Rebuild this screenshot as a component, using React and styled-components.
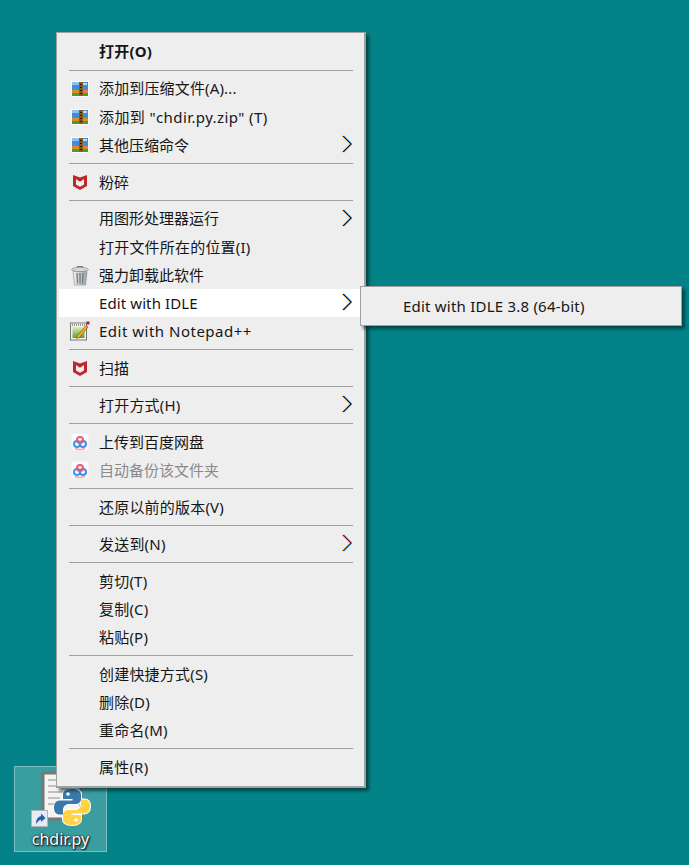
import React from 'react';
import styled, { createGlobalStyle } from 'styled-components';

const Global = createGlobalStyle`
  html, body { margin: 0; padding: 0; height: 100%; background: #038387; overflow: hidden; }
  #root { height: 865px; }
`;
const FONT = `"Noto Sans", "Noto Sans CJK SC", sans-serif`;

const Desktop = styled.div`
  position: relative;
  width: 689px;
  height: 865px;
  background: #038387;
  font-family: ${FONT};
  font-size: 15px;
  color: #161616;
`;
const Menu = styled.div`
  position: absolute;
  left: 56px;
  top: 32px;
  width: 307px;
  padding: 5px 0;
  background: #eeeeee;
  border: 1px solid #a0a0a0;
  border-right-width: 2px;
  border-bottom-width: 2px;
  box-shadow: 3px 3px 3px rgba(0, 40, 40, 0.65);
  display: flex;
  flex-direction: column;
`;
const Row = styled.div`
  display: flex;
  align-items: center;
  box-sizing: border-box;
  height: 28px;
  padding-left: 10px;
  padding-right: 10px;
  margin-left: 2px;
  background: ${p => (p.$active ? '#ffffff' : 'transparent')};
  color: ${p => (p.$disabled ? '#8a8a8a' : '#161616')};
  font-weight: ${p => (p.$bold ? 700 : 400)};
  white-space: pre;
`;
const IconSlot = styled.span`
  flex: none;
  width: 22px;
  height: 22px;
  margin-right: 8px;
  display: flex;
  align-items: center;
  justify-content: center;
`;
const Label = styled.span`
  flex: 1;
  padding-bottom: ${p => p.$lift}px;
  letter-spacing: ${p => p.$track}px;
`;
const ArrowSlot = styled.span`
  flex: none;
  width: 10px;
  height: 18px;
  margin-right: 2px;
  margin-bottom: 2px;
`;
const Sep = styled.div`
  height: 1px;
  margin: 4px 11px 4px 12px;
  background: #a0a0a0;
`;
const SubMenu = styled.div`
  position: absolute;
  left: 360px;
  top: 286px;
  width: 278px;
  height: 38px;
  background: #eeeeee;
  border: 1px solid #a0a0a0;
  box-shadow: 3px 3px 3px rgba(0, 40, 40, 0.65);
  display: flex;
  align-items: center;
  padding-left: 42px;
  letter-spacing: 0.22px;
`;
const DesktopIcon = styled.div`
  position: absolute;
  left: 14px;
  top: 766px;
  width: 91px;
  height: 84px;
  background: rgba(255, 255, 255, 0.22);
  border: 1px solid rgba(255, 255, 255, 0.35);
  display: flex;
  flex-direction: column;
  align-items: center;
`;
const FileArt = styled.svg`
  flex: none;
  margin-top: 1px;
  margin-left: 15px;
  align-self: flex-start;
`;
const FileLabel = styled.span`
  color: #fff;
  font-size: 16px;
  line-height: 20px;
  margin-top: -1px;
  text-shadow: 1px 1px 2px #000, 0 0 2px #000;
`;

const Rar = () => (
  <svg width="18" height="16" viewBox="0 0 18 16">
    <rect x="0" y="0" width="18" height="16" fill="#fff" opacity=".75" />
    <rect x="1" y="1" width="16" height="8" fill="#3d8ee0" />
    <rect x="1" y="1" width="8" height="3" fill="#8cc4f0" />
    <rect x="11" y="2" width="5" height="2" fill="#bcdcf6" />
    <rect x="1" y="9" width="16" height="3" fill="#e08a24" />
    <rect x="1" y="12" width="16" height="3" fill="#4d9a2d" />
    <rect x="8" y="1" width="4" height="14" fill="#8a5a1c" />
    <rect x="9" y="3" width="2" height="1" fill="#2a1a08" />
    <rect x="9" y="6" width="2" height="1" fill="#2a1a08" />
    <rect x="9" y="9" width="2" height="1" fill="#2a1a08" />
    <rect x="9" y="12" width="2" height="1" fill="#2a1a08" />
  </svg>
);
const Mcafee = () => (
  <svg width="16" height="17" viewBox="0 0 16 17">
    <path fill="#c0272d" fillRule="evenodd" d="M1 1 L8 3.5 L15 1 V12 L8 16 L1 12 Z M4 5 V10.5 L8 12.8 L12 10.5 V5 L8 7.8 Z" />
  </svg>
);
const Trash = () => (
  <svg width="20" height="21" viewBox="0 0 20 21">
    <defs>
      <linearGradient id="tr" x1="0" x2="1"><stop offset="0" stopColor="#f4f4f4" /><stop offset="1" stopColor="#9aa0a4" /></linearGradient>
    </defs>
    <path d="M7 3 V1.5 H13 V3" fill="none" stroke="#7a7f84" />
    <ellipse cx="10" cy="4.5" rx="8.5" ry="2" fill="#d8dadc" stroke="#858a8e" strokeWidth=".7" />
    <path d="M3 6.5 H17 L15.5 20 H4.5 Z" fill="url(#tr)" stroke="#858a8e" strokeWidth=".6" />
    <path d="M7 8 L7.5 18.5 M10 8 V18.5 M13 8 L12.5 18.5" stroke="#6d7276" strokeWidth="1.2" />
  </svg>
);
const Notepad = () => (
  <svg width="20" height="20" viewBox="0 0 20 20">
    <defs>
      <linearGradient id="np" x1="0" x2="0" y1="0" y2="1"><stop offset="0" stopColor="#e4ecb0" /><stop offset="1" stopColor="#4fa336" /></linearGradient>
    </defs>
    <rect x="0.5" y="2" width="16" height="17" fill="#f2f2ea" stroke="#777" />
    <rect x="2.5" y="6" width="12" height="11" fill="url(#np)" />
    <path d="M2 4 H15" stroke="#999" strokeDasharray="1 1" strokeWidth="2" />
    <path d="M7 15 L16 4.5 L18 6 L9.5 16.5 L6.5 17.5 Z" fill="#f2b01e" stroke="#6b4a10" strokeWidth=".6" />
    <rect x="16.5" y="0.5" width="3" height="3" fill="#a8222a" />
  </svg>
);
const Baidu = () => (
  <svg width="18" height="18" viewBox="0 0 18 18">
    <rect x=".5" y=".5" width="17" height="17" rx="4" fill="#fbfbfd" />
    <path d="M3 11 a3 3 0 1 1 6 0 a3 3 0 1 1 -6 0" fill="none" stroke="#2f9df0" strokeWidth="2" />
    <path d="M9 11 a3 3 0 1 1 6 0 a3 3 0 1 1 -6 0" fill="none" stroke="#3f8ee8" strokeWidth="2" />
    <path d="M6 7 a3 3 0 1 1 6 0 a3 3 0 1 1 -6 0" fill="none" stroke="#ec5a6e" strokeWidth="2" />
    <path d="M4 15.5 Q9 17.5 14 15.5" fill="none" stroke="#f3a5b2" strokeWidth="1.5" />
  </svg>
);
const Chevron = ({ color = '#111' }) => (
  <svg width="10" height="18" viewBox="0 0 10 18">
    <path d="M1 1 L9 9 L1 17" fill="none" stroke="#f0a030" strokeWidth="1.4" transform="translate(-.6 0)" />
    <path d="M1 1 L9 9 L1 17" fill="none" stroke="#1e88e5" strokeWidth="1.4" transform="translate(.6 0)" />
    <path d="M1 1 L9 9 L1 17" fill="none" stroke={color} strokeWidth="1" />
  </svg>
);
const SNAKE = 'M18.7 1 C11 1 10 4 10 7 V11 H19.5 V12.5 H6.5 C3 12.5 1 15.5 1 19.5 C1 24 3 26.5 6.5 26.5 H10 V21.8 C10 18.5 12.7 16 16 16 H23 C25.8 16 28 13.8 28 11 V6.5 C28 3.5 25 1 18.7 1 Z';

const groups = [
  [{ t: '打开(O)', bold: true, lift: 4 }],
  [
    { t: '添加到压缩文件(A)...', icon: <Rar />, lift: 4, track: 0.15 },
    { t: '添加到 "chdir.py.zip" (T)', icon: <Rar />, track: 0.4 },
    { t: '其他压缩命令', icon: <Rar />, arrow: true },
  ],
  [{ t: '粉碎', icon: <Mcafee /> }],
  [
    { t: '用图形处理器运行', arrow: true, lift: 4 },
    { t: '打开文件所在的位置(I)' },
    { t: '强力卸载此软件', icon: <Trash /> },
    { t: 'Edit with IDLE', arrow: true, active: true, lift: 0, track: 0.1 },
    { t: 'Edit with Notepad++', icon: <Notepad />, lift: 0, track: 0.5 },
  ],
  [{ t: '扫描', icon: <Mcafee /> }],
  [{ t: '打开方式(H)', arrow: true }],
  [
    { t: '上传到百度网盘', icon: <Baidu /> },
    { t: '自动备份该文件夹', icon: <Baidu />, disabled: true },
  ],
  [{ t: '还原以前的版本(V)' }],
  [{ t: '发送到(N)', arrow: true, arrowColor: '#7a1020' }],
  [{ t: '剪切(T)' }, { t: '复制(C)' }, { t: '粘贴(P)' }],
  [{ t: '创建快捷方式(S)' }, { t: '删除(D)' }, { t: '重命名(M)' }],
  [{ t: '属性(R)' }],
];

const defaultTrack = t => (t.includes('(') ? 0.2 : 0);

export default function App() {
  return (
    <Desktop>
      <Global />
      <DesktopIcon>
        <FileArt width="62" height="62" viewBox="0 0 62 62">
          <rect x="13" y="5" width="38" height="46" fill="#f4f4f4" stroke="#777" strokeWidth="3" />
          <path d="M18 12 H46 M18 18 H46 M18 24 H36 M18 30 H30 M18 36 H28" stroke="#c0c0c0" strokeWidth="2" />
          <g transform="translate(23 20)">
            <path d={SNAKE} fill="#fff" stroke="#fff" strokeWidth="2" />
            <path d={SNAKE} transform="rotate(180 19 19)" fill="#fff" stroke="#fff" strokeWidth="2" />
            <path d={SNAKE} fill="#3c78aa" />
            <path d={SNAKE} transform="rotate(180 19 19)" fill="#ffd343" />
            <circle cx="15" cy="6" r="1.8" fill="#fff" />
            <circle cx="23" cy="32" r="1.8" fill="#fff" />
          </g>
          <rect x="1.5" y="42.5" width="16" height="16" fill="#e6ecf4" stroke="#b0b4ba" />
          <path d="M6 56 Q6 49 11 48 V45.5 L15.5 50 L11 54 V51.5 Q8.5 52 6 56 Z" fill="#1f5fb4" />
        </FileArt>
        <FileLabel>chdir.py</FileLabel>
      </DesktopIcon>
      <Menu>
        {groups.map((g, i) => (
          <React.Fragment key={i}>
            {i > 0 && <Sep />}
            {g.map(r => (
              <Row key={r.t} $bold={r.bold} $active={r.active} $disabled={r.disabled}>
                <IconSlot>{r.icon}</IconSlot>
                <Label $lift={r.lift ?? 2} $track={r.track ?? defaultTrack(r.t)}>{r.t}</Label>
                {r.arrow && <ArrowSlot><Chevron color={r.arrowColor} /></ArrowSlot>}
              </Row>
            ))}
          </React.Fragment>
        ))}
      </Menu>
      <SubMenu>Edit with IDLE 3.8 (64-bit)</SubMenu>
    </Desktop>
  );
}
